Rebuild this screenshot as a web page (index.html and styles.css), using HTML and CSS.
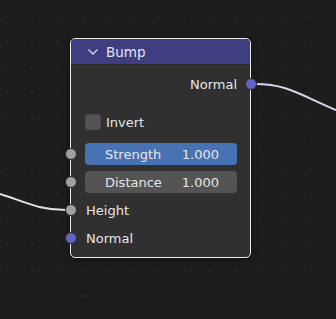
FILE: index.html
```html
<!DOCTYPE html>
<html lang="en">
<head>
    <meta charset="UTF-8">
    <meta name="viewport" content="width=device-width, initial-scale=1.0">
    <title>Bump Node</title>
    <link rel="stylesheet" href="styles.css">
</head>
<body>
    <div class="editor">
        <svg class="wires" width="336" height="319" viewBox="0 0 336 319">
            <path d="M0,194 C28,203 40,210 66,210" class="wire"/>
            <path d="M255,84 C288,84 300,95 336,110" class="wire wire-vector"/>
        </svg>

        <div class="node">
            <div class="node-header">
                <svg class="chevron" width="12" height="8" viewBox="0 0 12 8">
                    <path d="M1.5,1.5 L6,6 L10.5,1.5" fill="none" stroke="#d8d8e8" stroke-width="1.3"/>
                </svg>
                <span>Bump</span>
            </div>
            <div class="node-body">
                <div class="row row-output">
                    <span>Normal</span>
                    <i class="socket socket-out vector"></i>
                </div>

                <div class="row row-check">
                    <span class="checkbox"></span>
                    <span>Invert</span>
                </div>

                <div class="row row-field">
                    <i class="socket socket-in"></i>
                    <div class="field active">
                        <span>Strength</span>
                        <span>1.000</span>
                    </div>
                </div>
                <div class="row row-field">
                    <i class="socket socket-in"></i>
                    <div class="field">
                        <span>Distance</span>
                        <span>1.000</span>
                    </div>
                </div>

                <div class="row row-input">
                    <i class="socket socket-in"></i>
                    <span>Height</span>
                </div>
                <div class="row row-input">
                    <i class="socket socket-in vector"></i>
                    <span>Normal</span>
                </div>
            </div>
        </div>
    </div>
</body>
</html>
```

FILE: styles.css
```css
body {
    margin: 0;
    background-color: #1d1d1d;
    font-family: "DejaVu Sans", sans-serif;
    font-size: 13px;
    color: #e6e6e6;
}
.editor {
    position: relative;
    width: 336px;
    height: 319px;
    overflow: hidden;
    background-color: #1d1d1d;
    background-image: radial-gradient(circle, #2a2a2a 1px, transparent 1.2px);
    background-size: 25.4px 25.4px;
    background-position: -6px 4px;
}
.wires {
    position: absolute;
    left: 0;
    top: 0;
}
.wire {
    fill: none;
    stroke: #e2e2e2;
    stroke-width: 2;
}
.wire-vector {
    stroke: #d6d4ee;
}
.node {
    position: absolute;
    left: 70px;
    top: 38px;
    width: 179px;
    height: 218px;
    border: 1px solid #eaeaea;
    border-radius: 5px;
    background: #303030;
    box-shadow: 0 2px 6px rgba(0, 0, 0, 0.5);
}
.node-header {
    height: 25px;
    display: flex;
    align-items: center;
    gap: 7px;
    padding-left: 16px;
    background: #3d3d80;
    border-radius: 4px 4px 0 0;
    border-bottom: 1px solid #2a2a2a;
    font-size: 13.5px;
    color: #e4e4ee;
}
.chevron {
    margin-top: 1px;
}
.node-body {
    display: flex;
    flex-direction: column;
    padding-top: 8px;
}
.row {
    position: relative;
    display: flex;
    align-items: center;
    height: 22px;
}
.row-output {
    justify-content: flex-end;
    padding-right: 13px;
}
.row-check {
    margin-top: 16px;
    padding-left: 14px;
    gap: 5px;
}
.checkbox {
    width: 16px;
    height: 16px;
    border-radius: 3px;
    background: #545454;
    box-sizing: border-box;
    border: 1px solid #4a4a4a;
}
.row-field {
    margin-top: 6px;
    padding: 0 13px 0 14px;
}
.row-check + .row-field {
    margin-top: 10px;
}
.field {
    flex: 1;
    height: 22px;
    display: flex;
    align-items: center;
    justify-content: space-between;
    padding: 0 18px 0 20px;
    border-radius: 4px;
    background: #545454;
}
.field.active {
    background: #4772b3;
}
.row-input {
    margin-top: 6px;
    padding-left: 15px;
}
.socket {
    position: absolute;
    width: 12px;
    height: 12px;
    box-sizing: border-box;
    border-radius: 50%;
    background: #a1a1a1;
    border: 1px solid #2a2a2a;
    top: 50%;
    margin-top: -6px;
}
.socket.vector {
    background: #6363c7;
}
.socket-in {
    left: -6.5px;
}
.socket-out {
    right: -6.5px;
}
```
